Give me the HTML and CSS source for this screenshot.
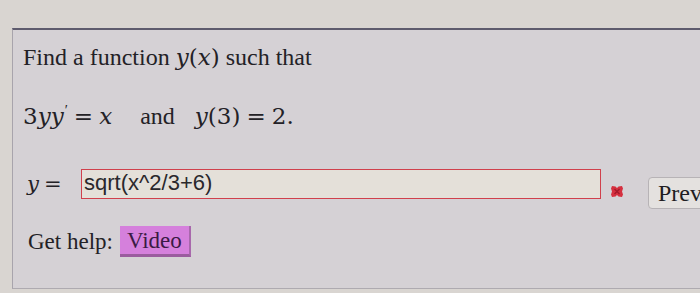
FILE: index.html
```html
<!DOCTYPE html>
<html>
<head>
<meta charset="utf-8">
<link rel="stylesheet" href="styles.css">
</head>
<body>
<div class="page">
  <div class="problem">
    <p class="line l1">Find a function <span class="mi">y</span><span class="mo">(</span><span class="mi">x</span><span class="mo">)</span> such that</p>
    <p class="line l2"><span class="mn">3</span><span class="mi">yy</span><sup class="prime">′</sup><span class="rel">=</span><span class="mi">x</span><span class="sp"></span>and<span class="sp2"></span><span class="mi">y</span><span class="mo">(</span><span class="mn">3</span><span class="mo">)</span><span class="rel">=</span><span class="mn">2.</span></p>
    <div class="answer-row">
      <span class="lhs"><span class="mi">y</span><span class="rel">=</span></span>
      <div class="answer-input">sqrt(x^2/3+6)</div>
      <svg class="mark" width="14" height="13" viewBox="0 0 14 13">
        <path d="M2 1 L5.5 1.5 L7 3 L8.5 1.5 L12 1 L13 3.5 L12 6.5 L13 9.5 L12 12 L8.5 11.5 L7 10 L5.5 11.5 L2 12 L1 9.5 L2 6.5 L1 3.5 Z" fill="#d52f3f"/>
        <path d="M4.5 4 L9.5 9 M9.5 4 L4.5 9" stroke="#a3182a" stroke-width="1.3"/>
      </svg>
      <div class="preview-btn">Preview My Answers</div>
    </div>
    <div class="help-row">
      <span class="help-label">Get help:</span>
      <span class="video-btn">Video</span>
    </div>
  </div>
</div>
</body>
</html>
```
FILE: styles.css
```css
html, body {
  margin: 0;
  padding: 0;
  height: 100%;
  overflow: hidden;
}
body {
  background: #d9d5d1;
  font-family: "Liberation Serif", "Times New Roman", serif;
  color: #232126;
}
.page {
  padding-top: 28px;
  padding-left: 12px;
  height: 100%;
  box-sizing: border-box;
}
.problem {
  background: #d5d1d5;
  border-top: 2px solid #5e5b6d;
  border-left: 1px solid #a8a4ac;
  border-bottom: 1px solid #aeaab0;
  height: 261px;
  box-sizing: border-box;
  padding: 12px 0 0 10px;
  white-space: nowrap;
}
.line {
  margin: 0;
  font-size: 24px;
  line-height: 30px;
}
.l2 {
  margin-top: 29px;
}
.mi {
  font-style: italic;
  font-family: "DejaVu Serif", "Liberation Serif", serif;
  font-size: 0.96em;
}
.mo, .mn {
  font-family: "DejaVu Serif", "Liberation Serif", serif;
  font-size: 0.96em;
}
.rel {
  font-family: "DejaVu Serif", "Liberation Serif", serif;
  font-size: 0.96em;
  margin: 0 6px;
}
.prime {
  font-size: 0.6em;
  vertical-align: 0.6em;
  margin-left: 1px;
  line-height: 0;
}
.sp {
  display: inline-block;
  width: 28px;
}
.sp2 {
  display: inline-block;
  width: 20px;
}
.answer-row {
  display: flex;
  align-items: flex-start;
  margin-top: 38px;
  margin-left: 4px;
}
.lhs {
  font-size: 22px;
  line-height: 30px;
  width: 54px;
  flex: none;
}
.lhs .rel {
  margin: 0 0 0 5px;
}
.answer-input {
  flex: none;
  width: 520px;
  height: 30px;
  box-sizing: border-box;
  border: 1.5px solid #d0404c;
  background: #e4e0d9;
  font-family: "Liberation Sans", Arial, sans-serif;
  font-size: 22px;
  line-height: 26px;
  padding-left: 2px;
  color: #2a282c;
}
.mark {
  flex: none;
  margin: 16px 0 0 9px;
}
.preview-btn {
  flex: none;
  margin: 8px 0 0 24px;
  height: 32px;
  padding: 0 9px;
  box-sizing: border-box;
  background: #e4e1df;
  border: 1px solid #b7b3b6;
  border-radius: 4px;
  font-size: 24px;
  line-height: 30px;
  color: #1f1d22;
}
.help-row {
  display: flex;
  align-items: center;
  margin-top: 17px;
  margin-left: 5px;
}
.help-label {
  font-size: 23px;
  margin-right: 7px;
}
.video-btn {
  display: block;
  background: #d580dc;
  border-bottom: 3px solid #9a5c9e;
  border-right: 2px solid #a868ac;
  padding: 0 7px;
  height: 31px;
  box-sizing: border-box;
  font-size: 23px;
  line-height: 30px;
  color: #3a1a44;
}
```
